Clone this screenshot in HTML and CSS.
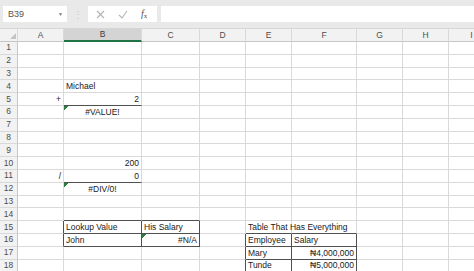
FILE: index.html
```html
<!DOCTYPE html>
<html lang="en">
<head>
    <meta charset="UTF-8">
    <title>Book1 - Excel</title>
    <link rel="stylesheet" href="styles.css">
</head>
<body>
    <div class="toolbar">
        <div class="name-box"><span>B39</span><span class="caret">&#9660;</span></div>
        <div class="grip">&#8942;</div>
        <div class="fx-buttons">
            <svg class="btn" width="9" height="9" viewBox="0 0 9 9"><path d="M1 1L8 8M8 1L1 8" stroke="#b3b3b3" stroke-width="1.1" fill="none"/></svg>
            <svg class="btn" width="10" height="9" viewBox="0 0 10 9"><path d="M1 5L4 8L9 1" stroke="#b3b3b3" stroke-width="1.1" fill="none"/></svg>
            <span class="btn fx"><i>f</i><sub>x</sub></span>
        </div>
        <div class="formula"></div>
    </div>
    <table class="sheet">
        <colgroup>
            <col class="c-head"><col class="c-a"><col class="c-b"><col class="c-c"><col class="c-d">
            <col class="c-e"><col class="c-f"><col class="c-g"><col class="c-h"><col class="c-i">
        </colgroup>
        <thead>
            <tr>
                <th class="corner"><span class="corner-mark"></span></th>
                <th>A</th><th class="sel">B</th><th>C</th><th>D</th><th>E</th><th>F</th><th>G</th><th>H</th><th>I</th>
            </tr>
        </thead>
        <tbody>
            <tr><th>1</th><td></td><td></td><td></td><td></td><td></td><td></td><td></td><td></td><td></td></tr>
            <tr><th>2</th><td></td><td></td><td></td><td></td><td></td><td></td><td></td><td></td><td></td></tr>
            <tr><th>3</th><td></td><td></td><td></td><td></td><td></td><td></td><td></td><td></td><td></td></tr>
            <tr><th>4</th><td></td><td>Michael</td><td></td><td></td><td></td><td></td><td></td><td></td><td></td></tr>
            <tr><th>5</th><td class="num">+</td><td class="num bb">2</td><td></td><td></td><td></td><td></td><td></td><td></td><td></td></tr>
            <tr><th>6</th><td></td><td class="mid err">#VALUE!</td><td></td><td></td><td></td><td></td><td></td><td></td><td></td></tr>
            <tr><th>7</th><td></td><td></td><td></td><td></td><td></td><td></td><td></td><td></td><td></td></tr>
            <tr><th>8</th><td></td><td></td><td></td><td></td><td></td><td></td><td></td><td></td><td></td></tr>
            <tr><th>9</th><td></td><td></td><td></td><td></td><td></td><td></td><td></td><td></td><td></td></tr>
            <tr><th>10</th><td></td><td class="num">200</td><td></td><td></td><td></td><td></td><td></td><td></td><td></td></tr>
            <tr><th>11</th><td class="num">/</td><td class="num bb">0</td><td></td><td></td><td></td><td></td><td></td><td></td><td></td></tr>
            <tr><th>12</th><td></td><td class="mid err">#DIV/0!</td><td></td><td></td><td></td><td></td><td></td><td></td><td></td></tr>
            <tr><th>13</th><td></td><td></td><td></td><td></td><td></td><td></td><td></td><td></td><td></td></tr>
            <tr><th>14</th><td></td><td class="bb"></td><td class="bb"></td><td></td><td></td><td></td><td></td><td></td><td></td></tr>
            <tr><th>15</th><td class="br"></td><td class="br bb">Lookup Value</td><td class="br bb">His Salary</td><td></td><td class="bb">Table That Has Everything</td><td class="bb"></td><td></td><td></td><td></td></tr>
            <tr><th>16</th><td class="br"></td><td class="br bb">John</td><td class="num br bb err">#N/A</td><td class="br"></td><td class="br bb">Employee</td><td class="br bb">Salary</td><td></td><td></td><td></td></tr>
            <tr><th>17</th><td></td><td></td><td></td><td class="br"></td><td class="br bb">Mary</td><td class="num br bb">&#8358;4,000,000</td><td></td><td></td><td></td></tr>
            <tr><th>18</th><td></td><td></td><td></td><td class="br"></td><td class="br bb">Tunde</td><td class="num br bb">&#8358;5,000,000</td><td></td><td></td><td></td></tr>
        </tbody>
    </table>
</body>
</html>
```

FILE: styles.css
```css
:root {
    --toolbar-bg: #e9e9e9;
    --head-bg: #f2f2f2;
    --grid: #d9d9d9;
    --head-line: #c6c6c6;
    --text: #1a1a1a;
    --head-text: #4d4d4d;
    --dark-border: #505050;
    --excel-green: #217346;
}
body {
    margin: 0;
    width: 474px;
    height: 271px;
    overflow: hidden;
    background-color: #ffffff;
    font-family: "Liberation Sans", Arial, sans-serif;
    color: var(--text);
}
.toolbar {
    display: flex;
    align-items: center;
    height: 29px;
    box-sizing: border-box;
    background-color: var(--toolbar-bg);
    border-bottom: 1px solid #d6d6d6;
}
.name-box {
    display: flex;
    align-items: center;
    justify-content: space-between;
    width: 64px;
    height: 16px;
    margin-left: 3px;
    padding: 0 4px 0 5px;
    box-sizing: border-box;
    background-color: #ffffff;
    font-size: 9px;
    color: #555555;
}
.caret {
    font-size: 5px;
    color: #777777;
}
.grip {
    width: 21px;
    text-align: center;
    font-size: 10px;
    color: #c4c4c4;
}
.fx-buttons {
    display: flex;
    align-items: center;
    gap: 13px;
    width: 69px;
    height: 16px;
    padding-left: 8px;
    box-sizing: border-box;
    background-color: #ffffff;
}
.fx {
    font-family: "Liberation Serif", serif;
    font-size: 10px;
    color: #555555;
}
.fx sub {
    font-size: 7px;
    vertical-align: -1px;
}
.formula {
    flex: 1;
    height: 16px;
    margin-left: 4px;
    background-color: #ffffff;
}
.sheet {
    width: 495px;
    table-layout: fixed;
    border-collapse: separate;
    border-spacing: 0;
    font-size: 8.5px;
    background-color: #ffffff;
}
.c-head { width: 18px; }
.c-a { width: 46px; }
.c-b { width: 78px; }
.c-c { width: 58px; }
.c-d { width: 46px; }
.c-e { width: 46px; }
.c-f { width: 65px; }
.c-g { width: 46px; }
.c-h { width: 46px; }
.c-i { width: 46px; }
.sheet thead tr {
    height: 12.5px;
}
.sheet thead th {
    padding: 0;
    font-weight: normal;
    font-size: 8.5px;
    color: var(--head-text);
    background-color: var(--head-bg);
    border-right: 1px solid var(--grid);
    border-bottom: 1px solid var(--head-line);
    line-height: 11px;
}
.sheet thead th.sel {
    background-color: #d4d4d4;
    color: #3c3c3c;
    border-bottom: 2px solid var(--excel-green);
}
.corner {
    position: relative;
}
.corner-mark {
    position: absolute;
    right: 1px;
    bottom: 2px;
    width: 0;
    height: 0;
    border-left: 6px solid transparent;
    border-bottom: 6px solid #c4c4c4;
}
.sheet tbody tr {
    height: 12.8px;
}
.sheet tbody th {
    padding: 0;
    font-weight: normal;
    font-size: 8.5px;
    color: var(--head-text);
    background-color: var(--head-bg);
    border-right: 1px solid var(--head-line);
    border-bottom: 1px solid var(--grid);
    line-height: 11px;
}
.sheet td {
    padding: 0 2px;
    white-space: nowrap;
    line-height: 11px;
    vertical-align: bottom;
    border-right: 1px solid var(--grid);
    border-bottom: 1px solid var(--grid);
}
.num {
    text-align: right;
}
.mid {
    text-align: center;
}
.sheet td.bb {
    border-bottom-color: var(--dark-border);
}
.sheet td.br {
    border-right-color: var(--dark-border);
}
.err {
    background: linear-gradient(135deg, #2a7d3e 0 3px, transparent 3px) top left / 6px 6px no-repeat;
}
```
